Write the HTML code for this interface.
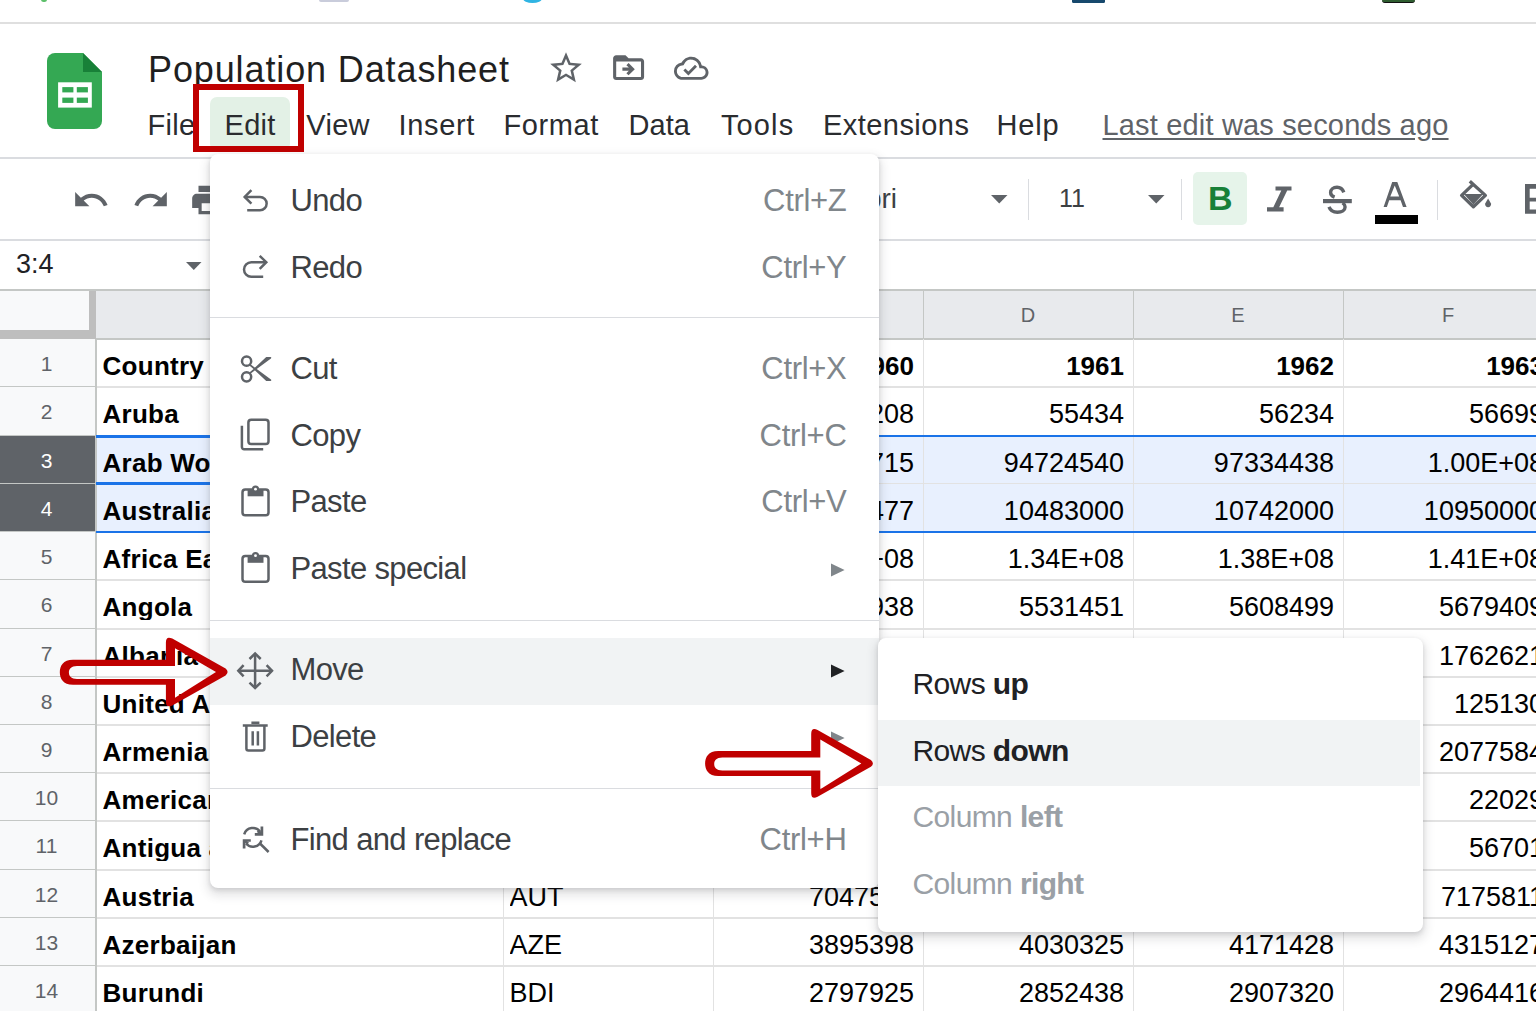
<!DOCTYPE html><html><head><meta charset="utf-8"><style>
*{box-sizing:border-box;margin:0;padding:0}
html,body{width:1536px;height:1011px;overflow:hidden;background:#fff;font-family:"Liberation Sans",sans-serif}
.a{position:absolute}
.t{position:absolute;white-space:pre;line-height:1}
.menu{position:absolute;background:#fff;border-radius:8px;box-shadow:0 5px 10px 3px rgba(60,64,67,.13),0 2px 4px rgba(60,64,67,.16)}
</style></head><body><div class="a" style="left:0;top:22.2px;width:1536px;height:1.8px;background:#dfdfdf"></div>
<div class="a" style="left:41px;top:-3px;width:6px;height:5px;border-radius:3px;background:#5cbf6a"></div>
<div class="a" style="left:319px;top:-2px;width:30px;height:4px;border-radius:2px;background:#c9ccdb"></div>
<div class="a" style="left:523px;top:-6px;width:19px;height:9px;border-radius:50%;background:#2fb4e3"></div>
<div class="a" style="left:1072px;top:-3px;width:33px;height:5.5px;border-radius:1.5px;background:#17496d"></div>
<div class="a" style="left:1382px;top:-4px;width:33px;height:6.5px;border-radius:3px;background:#2f5d30;border-bottom:1.5px solid #111"></div>
<svg class="a" style="left:47px;top:53px" width="56" height="76" viewBox="0 0 56 76">
<path d="M8 0 H36 L55 19 V68 a8 8 0 0 1 -8 8 H8 a8 8 0 0 1 -8 -8 V8 a8 8 0 0 1 8 -8Z" fill="#34a853"/>
<path d="M36 0 L55 19 H36Z" fill="#188038"/>
<rect x="11.1" y="29.3" width="33.7" height="25.3" fill="#fff"/>
<rect x="15.3" y="34.1" width="11.1" height="5.3" fill="#34a853"/>
<rect x="29.8" y="34.1" width="11.1" height="5.3" fill="#34a853"/>
<rect x="15.3" y="44.6" width="11.1" height="5.3" fill="#34a853"/>
<rect x="29.8" y="44.6" width="11.1" height="5.3" fill="#34a853"/>
</svg>
<div class="t" style="left:148px;top:52px;font-size:36px;color:#1f1f1f;letter-spacing:0.88px">Population Datasheet</div>
<svg class="a" style="left:547.3px;top:49.4px" width="38" height="38" viewBox="0 0 24 24"><path fill="#5f6368" d="M22 9.24l-7.19-.62L12 2 9.19 8.63 2 9.24l5.46 4.73L5.82 21 12 17.27 18.18 21l-1.63-7.03L22 9.24zM12 15.4l-3.76 2.27 1-4.28-3.32-2.88 4.38-.38L12 6.1l1.71 4.04 4.38.38-3.32 2.88 1 4.28L12 15.4z"/></svg>
<svg class="a" style="left:609.6px;top:49.3px" width="37.2" height="37.2" viewBox="0 0 24 24"><path fill="#5f6368" d="M20 6h-8l-2-2H4c-1.1 0-2 .9-2 2v12c0 1.1.9 2 2 2h16c1.1 0 2-.9 2-2V8c0-1.1-.9-2-2-2zm0 12H4V8h16v10zm-8.01-9l-1.41 1.41L12.16 12H8v2h4.16l-1.59 1.59L11.99 17 16 13.01 11.99 9z"/></svg>
<svg class="a" style="left:674.2px;top:51px" width="34.5" height="34.5" viewBox="0 0 24 24"><path fill="#5f6368" d="M19.35 10.04A7.49 7.49 0 0 0 12 4C9.11 4 6.6 5.64 5.35 8.04A5.994 5.994 0 0 0 0 14c0 3.31 2.69 6 6 6h13c2.76 0 5-2.24 5-5 0-2.64-2.05-4.78-4.65-4.96zM19 18H6c-2.21 0-4-1.79-4-4 0-2.05 1.53-3.76 3.56-3.97l1.07-.11.5-.95A5.469 5.469 0 0 1 12 6c2.62 0 4.88 1.86 5.39 4.43l.3 1.5 1.53.11A2.98 2.98 0 0 1 22 15c0 1.65-1.35 3-3 3zm-9-3.82l-2.09-2.09L6.5 13.5 10 17l6.01-6.01-1.41-1.41z"/></svg>
<div class="a" style="left:209.5px;top:97px;width:80px;height:54px;border-radius:7px;background:#e3f1e6"></div>
<div class="t" style="left:147.5px;top:111px;font-size:29px;color:#2a2c2f;letter-spacing:0.3px">File</div>
<div class="t" style="left:224.5px;top:111px;font-size:29px;color:#2a2c2f;letter-spacing:0.3px">Edit</div>
<div class="t" style="left:306.3px;top:111px;font-size:29px;color:#2a2c2f;letter-spacing:0.3px">View</div>
<div class="t" style="left:398.5px;top:111px;font-size:29px;color:#2a2c2f;letter-spacing:0.65px">Insert</div>
<div class="t" style="left:503.5px;top:111px;font-size:29px;color:#2a2c2f;letter-spacing:0.6px">Format</div>
<div class="t" style="left:628.5px;top:111px;font-size:29px;color:#2a2c2f;letter-spacing:0.05px">Data</div>
<div class="t" style="left:720.9px;top:111px;font-size:29px;color:#2a2c2f;letter-spacing:1.15px">Tools</div>
<div class="t" style="left:823px;top:111px;font-size:29px;color:#2a2c2f;letter-spacing:0.45px">Extensions</div>
<div class="t" style="left:996.5px;top:111px;font-size:29px;color:#2a2c2f;letter-spacing:0.8px">Help</div>
<div class="t" style="left:1102.5px;top:111px;font-size:29px;color:#5f6368;letter-spacing:0.17px;text-decoration:underline;text-underline-offset:3px">Last edit was seconds ago</div>
<div class="a" style="left:192.5px;top:84px;width:111px;height:67.5px;border:6.5px solid #c00000"></div>
<div class="a" style="left:0;top:157px;width:1536px;height:1.5px;background:#dadce0"></div>
<svg class="a" style="left:71.8px;top:181px" width="38" height="38" viewBox="0 0 24 24"><path fill="#5f6368" d="M12.5 8c-2.65 0-5.05.99-6.9 2.6L2 7v9h9l-3.62-3.62c1.39-1.16 3.16-1.88 5.12-1.88 3.54 0 6.55 2.31 7.6 5.5l2.37-.78C21.08 11.03 17.15 8 12.5 8z"/></svg>
<svg class="a" style="left:132.1px;top:181px" width="38" height="38" viewBox="0 0 24 24"><path fill="#5f6368" d="M18.4 10.6C16.55 8.99 14.15 8 11.5 8c-4.65 0-8.58 3.03-9.96 7.22L3.9 16c1.05-3.19 4.05-5.5 7.6-5.5 1.95 0 3.73.72 5.12 1.88L13 16h9V7l-3.6 3.6z"/></svg>
<svg class="a" style="left:188.6px;top:180.5px" width="38" height="38" viewBox="0 0 24 24"><path fill="#5f6368" d="M19 8H5c-1.66 0-3 1.34-3 3v6h4v4h12v-4h4v-6c0-1.66-1.34-3-3-3zm-3 11H8v-5h8v5zm3-7c-.55 0-1-.45-1-1s.45-1 1-1 1 .45 1 1-.45 1-1 1zm-1-9H6v4h12V3z"/></svg>
<div class="t" style="left:697px;width:200px;text-align:right;top:185px;font-size:28px;color:#3c4043">Calibri</div>
<svg class="a" style="left:991px;top:195px" width="17" height="9"><path d="M0 0H16.5L8.25 8.5Z" fill="#5f6368"/></svg>
<div class="a" style="left:1027.5px;top:179px;width:1.5px;height:41px;background:#dadce0"></div>
<div class="t" style="left:1059px;top:186px;font-size:25px;color:#3c4043">11</div>
<svg class="a" style="left:1148px;top:195px" width="17" height="9"><path d="M0 0H16.5L8.25 8.5Z" fill="#5f6368"/></svg>
<div class="a" style="left:1180.5px;top:179px;width:1.5px;height:41px;background:#dadce0"></div>
<div class="a" style="left:1193px;top:172px;width:54px;height:53px;border-radius:5px;background:#e6f4ea"></div>
<div class="t" style="left:1208px;top:181px;font-size:34px;font-weight:700;color:#188038">B</div>
<svg class="a" style="left:0;top:0" width="1536" height="1011" fill="#5f6368">
<path d="M1275.5 186.6 H1291.5 V190.6 H1275.5Z M1267 207.3 H1283.6 V211.5 H1267Z M1281.3 190.4 H1287.2 L1279 207.4 H1273.2Z"/>
<rect x="1323" y="199" width="28.8" height="4.2"/>
<path d="M1343.8 192.4 C1342.6 189 1340 187.3 1337 187.3 C1333.2 187.3 1330.6 189.6 1330.6 192.4 C1330.6 194.6 1332 196.2 1334.6 197.2" fill="none" stroke="#5f6368" stroke-width="3.4"/>
<path d="M1342.6 202.8 C1344.3 204 1345.1 205.3 1345.1 207 C1345.1 210.2 1341.8 212.2 1337.4 212.2 C1333.4 212.2 1330.3 210.4 1329 206.8" fill="none" stroke="#5f6368" stroke-width="3.4"/>
<path fill-rule="evenodd" d="M1392.2 181.9 H1397.3 L1406.6 207.1 H1403 L1400.6 200.2 H1389.2 L1386.9 207.1 H1383.6Z M1394.75 185.6 L1399.2 196.4 H1390.3Z"/>
<path d="M1469.8 181.2 L1485.4 195.4 L1473.4 206.8 L1461.6 195.4 L1472.8 184.6" fill="none" stroke="#5f6368" stroke-width="3.3" stroke-linejoin="round"/>
<path d="M1463.8 194 H1483.2 L1473.4 204.6Z"/>
<path d="M1488.1 198.6 L1491 203.4 A3 3 0 1 1 1485.2 203.4 Z"/>
<path d="M1525 184 H1536 V188.7 H1529.7 V197.8 H1536 V201.6 H1529.7 V209.4 H1536 V213.8 H1525Z"/>
</svg>
<div class="a" style="left:1375px;top:215.4px;width:43.3px;height:8.3px;background:#000"></div>
<div class="a" style="left:1436.5px;top:180px;width:1.5px;height:40px;background:#dadce0"></div>
<div class="a" style="left:0;top:239px;width:1536px;height:1.5px;background:#dadce0"></div>
<div class="t" style="left:16px;top:251px;font-size:27px;color:#202124">3:4</div>
<svg class="a" style="left:186px;top:262px" width="16" height="9"><path d="M0 0H15.5L7.75 8Z" fill="#5f6368"/></svg>
<div class="a" style="left:0;top:289px;width:1536px;height:50px;background:#e8eaed"></div>
<div class="a" style="left:0;top:289px;width:1536px;height:1.8px;background:#c4c7c5"></div>
<div class="a" style="left:0;top:290.8px;width:88.5px;height:39px;background:#f8f9fa"></div>
<div class="a" style="left:88.5px;top:290.8px;width:7.7px;height:48.5px;background:#bebebe"></div>
<div class="a" style="left:0;top:329.8px;width:96.2px;height:9.5px;background:#bebebe"></div>
<div class="a" style="left:96px;top:338px;width:1440px;height:2px;background:#c4c7c5"></div>
<div class="t" style="left:96px;width:407px;text-align:center;top:305px;font-size:20px;color:#5f6368">A</div>
<div class="a" style="left:502.5px;top:290px;width:1.5px;height:49px;background:#c4c7c5"></div>
<div class="t" style="left:503px;width:210px;text-align:center;top:305px;font-size:20px;color:#5f6368">B</div>
<div class="a" style="left:712.5px;top:290px;width:1.5px;height:49px;background:#c4c7c5"></div>
<div class="t" style="left:713px;width:210px;text-align:center;top:305px;font-size:20px;color:#5f6368">C</div>
<div class="a" style="left:922.5px;top:290px;width:1.5px;height:49px;background:#c4c7c5"></div>
<div class="t" style="left:923px;width:210px;text-align:center;top:305px;font-size:20px;color:#5f6368">D</div>
<div class="a" style="left:1132.5px;top:290px;width:1.5px;height:49px;background:#c4c7c5"></div>
<div class="t" style="left:1133px;width:210px;text-align:center;top:305px;font-size:20px;color:#5f6368">E</div>
<div class="a" style="left:1342.5px;top:290px;width:1.5px;height:49px;background:#c4c7c5"></div>
<div class="t" style="left:1343px;width:210px;text-align:center;top:305px;font-size:20px;color:#5f6368">F</div>
<div class="a" style="left:0;top:339px;width:95px;height:48px;background:#f8f9fa"></div>
<div class="t" style="left:-1px;width:95px;text-align:center;top:353px;font-size:21px;color:#5f6368">1</div>
<div class="a" style="left:0;top:386px;width:95px;height:1.5px;background:#c4c7c5"></div>
<div class="a" style="left:96px;top:386px;width:1440px;height:1.5px;background:#e2e2e2"></div>
<div class="a" style="left:102.6px;width:399px;overflow:hidden;white-space:pre;line-height:1;letter-spacing:0.25px;top:353px;font-size:26px;font-weight:700;color:#000">Country</div>
<div class="t" style="left:713px;width:201px;text-align:right;overflow:hidden;top:353px;font-size:26px;font-weight:700;color:#000">1960</div>
<div class="t" style="left:923px;width:201px;text-align:right;overflow:hidden;top:353px;font-size:26px;font-weight:700;color:#000">1961</div>
<div class="t" style="left:1133px;width:201px;text-align:right;overflow:hidden;top:353px;font-size:26px;font-weight:700;color:#000">1962</div>
<div class="t" style="left:1343px;width:201px;text-align:right;overflow:hidden;top:353px;font-size:26px;font-weight:700;color:#000">1963</div>
<div class="a" style="left:0;top:387px;width:95px;height:49px;background:#f8f9fa"></div>
<div class="t" style="left:-1px;width:95px;text-align:center;top:401px;font-size:21px;color:#5f6368">2</div>
<div class="a" style="left:0;top:435px;width:95px;height:1.5px;background:#c4c7c5"></div>
<div class="a" style="left:96px;top:435px;width:1440px;height:1.5px;background:#e2e2e2"></div>
<div class="a" style="left:102.6px;width:399px;overflow:hidden;white-space:pre;line-height:1;letter-spacing:0.25px;top:401px;font-size:26px;font-weight:700;color:#000">Aruba</div>
<div class="a" style="left:509.6px;width:202px;overflow:hidden;white-space:pre;line-height:1;letter-spacing:0px;top:401px;font-size:27px;font-weight:400;color:#000">ABW</div>
<div class="t" style="left:713px;width:201px;text-align:right;overflow:hidden;top:401px;font-size:27px;font-weight:400;color:#000">54208</div>
<div class="t" style="left:923px;width:201px;text-align:right;overflow:hidden;top:401px;font-size:27px;font-weight:400;color:#000">55434</div>
<div class="t" style="left:1133px;width:201px;text-align:right;overflow:hidden;top:401px;font-size:27px;font-weight:400;color:#000">56234</div>
<div class="t" style="left:1343px;width:201px;text-align:right;overflow:hidden;top:401px;font-size:27px;font-weight:400;color:#000">56699</div>
<div class="a" style="left:0;top:436px;width:95px;height:48px;background:#5f6368"></div>
<div class="t" style="left:-1px;width:95px;text-align:center;top:450px;font-size:21px;color:#fff">3</div>
<div class="a" style="left:96px;top:436px;width:1440px;height:48px;background:#e8f0fe"></div>
<div class="a" style="left:0;top:483px;width:95px;height:1.5px;background:#c4c7c5"></div>
<div class="a" style="left:96px;top:483px;width:1440px;height:1.5px;background:#e2e2e2"></div>
<div class="a" style="left:102.6px;width:399px;overflow:hidden;white-space:pre;line-height:1;letter-spacing:0.25px;top:450px;font-size:26px;font-weight:700;color:#000">Arab World</div>
<div class="a" style="left:509.6px;width:202px;overflow:hidden;white-space:pre;line-height:1;letter-spacing:0px;top:450px;font-size:27px;font-weight:400;color:#000">ARB</div>
<div class="t" style="left:713px;width:201px;text-align:right;overflow:hidden;top:450px;font-size:27px;font-weight:400;color:#000">92197715</div>
<div class="t" style="left:923px;width:201px;text-align:right;overflow:hidden;top:450px;font-size:27px;font-weight:400;color:#000">94724540</div>
<div class="t" style="left:1133px;width:201px;text-align:right;overflow:hidden;top:450px;font-size:27px;font-weight:400;color:#000">97334438</div>
<div class="t" style="left:1343px;width:201px;text-align:right;overflow:hidden;top:450px;font-size:27px;font-weight:400;color:#000">1.00E+08</div>
<div class="a" style="left:0;top:484px;width:95px;height:48px;background:#5f6368"></div>
<div class="t" style="left:-1px;width:95px;text-align:center;top:498px;font-size:21px;color:#fff">4</div>
<div class="a" style="left:96px;top:484px;width:1440px;height:48px;background:#e8f0fe"></div>
<div class="a" style="left:0;top:531px;width:95px;height:1.5px;background:#c4c7c5"></div>
<div class="a" style="left:96px;top:531px;width:1440px;height:1.5px;background:#e2e2e2"></div>
<div class="a" style="left:102.6px;width:399px;overflow:hidden;white-space:pre;line-height:1;letter-spacing:0.25px;top:498px;font-size:26px;font-weight:700;color:#000">Australia</div>
<div class="a" style="left:509.6px;width:202px;overflow:hidden;white-space:pre;line-height:1;letter-spacing:0px;top:498px;font-size:27px;font-weight:400;color:#000">AUS</div>
<div class="t" style="left:713px;width:201px;text-align:right;overflow:hidden;top:498px;font-size:27px;font-weight:400;color:#000">10276477</div>
<div class="t" style="left:923px;width:201px;text-align:right;overflow:hidden;top:498px;font-size:27px;font-weight:400;color:#000">10483000</div>
<div class="t" style="left:1133px;width:201px;text-align:right;overflow:hidden;top:498px;font-size:27px;font-weight:400;color:#000">10742000</div>
<div class="t" style="left:1343px;width:201px;text-align:right;overflow:hidden;top:498px;font-size:27px;font-weight:400;color:#000">10950000</div>
<div class="a" style="left:0;top:532px;width:95px;height:48px;background:#f8f9fa"></div>
<div class="t" style="left:-1px;width:95px;text-align:center;top:546px;font-size:21px;color:#5f6368">5</div>
<div class="a" style="left:0;top:579px;width:95px;height:1.5px;background:#c4c7c5"></div>
<div class="a" style="left:96px;top:579px;width:1440px;height:1.5px;background:#e2e2e2"></div>
<div class="a" style="left:102.6px;width:399px;overflow:hidden;white-space:pre;line-height:1;letter-spacing:0.25px;top:546px;font-size:26px;font-weight:700;color:#000">Africa Eastern and Southern</div>
<div class="a" style="left:509.6px;width:202px;overflow:hidden;white-space:pre;line-height:1;letter-spacing:0px;top:546px;font-size:27px;font-weight:400;color:#000">AFE</div>
<div class="t" style="left:713px;width:201px;text-align:right;overflow:hidden;top:546px;font-size:27px;font-weight:400;color:#000">1.31E+08</div>
<div class="t" style="left:923px;width:201px;text-align:right;overflow:hidden;top:546px;font-size:27px;font-weight:400;color:#000">1.34E+08</div>
<div class="t" style="left:1133px;width:201px;text-align:right;overflow:hidden;top:546px;font-size:27px;font-weight:400;color:#000">1.38E+08</div>
<div class="t" style="left:1343px;width:201px;text-align:right;overflow:hidden;top:546px;font-size:27px;font-weight:400;color:#000">1.41E+08</div>
<div class="a" style="left:0;top:580px;width:95px;height:49px;background:#f8f9fa"></div>
<div class="t" style="left:-1px;width:95px;text-align:center;top:594px;font-size:21px;color:#5f6368">6</div>
<div class="a" style="left:0;top:628px;width:95px;height:1.5px;background:#c4c7c5"></div>
<div class="a" style="left:96px;top:628px;width:1440px;height:1.5px;background:#e2e2e2"></div>
<div class="a" style="left:102.6px;width:399px;overflow:hidden;white-space:pre;line-height:1;letter-spacing:0.25px;top:594px;font-size:26px;font-weight:700;color:#000">Angola</div>
<div class="a" style="left:509.6px;width:202px;overflow:hidden;white-space:pre;line-height:1;letter-spacing:0px;top:594px;font-size:27px;font-weight:400;color:#000">AGO</div>
<div class="t" style="left:713px;width:201px;text-align:right;overflow:hidden;top:594px;font-size:27px;font-weight:400;color:#000">5454938</div>
<div class="t" style="left:923px;width:201px;text-align:right;overflow:hidden;top:594px;font-size:27px;font-weight:400;color:#000">5531451</div>
<div class="t" style="left:1133px;width:201px;text-align:right;overflow:hidden;top:594px;font-size:27px;font-weight:400;color:#000">5608499</div>
<div class="t" style="left:1343px;width:201px;text-align:right;overflow:hidden;top:594px;font-size:27px;font-weight:400;color:#000">5679409</div>
<div class="a" style="left:0;top:629px;width:95px;height:48px;background:#f8f9fa"></div>
<div class="t" style="left:-1px;width:95px;text-align:center;top:643px;font-size:21px;color:#5f6368">7</div>
<div class="a" style="left:0;top:676px;width:95px;height:1.5px;background:#c4c7c5"></div>
<div class="a" style="left:96px;top:676px;width:1440px;height:1.5px;background:#e2e2e2"></div>
<div class="a" style="left:102.6px;width:399px;overflow:hidden;white-space:pre;line-height:1;letter-spacing:0.25px;top:643px;font-size:26px;font-weight:700;color:#000">Albania</div>
<div class="a" style="left:509.6px;width:202px;overflow:hidden;white-space:pre;line-height:1;letter-spacing:0px;top:643px;font-size:27px;font-weight:400;color:#000">ALB</div>
<div class="t" style="left:713px;width:201px;text-align:right;overflow:hidden;top:643px;font-size:27px;font-weight:400;color:#000">1608800</div>
<div class="t" style="left:923px;width:201px;text-align:right;overflow:hidden;top:643px;font-size:27px;font-weight:400;color:#000">1659800</div>
<div class="t" style="left:1133px;width:201px;text-align:right;overflow:hidden;top:643px;font-size:27px;font-weight:400;color:#000">1711319</div>
<div class="t" style="left:1343px;width:201px;text-align:right;overflow:hidden;top:643px;font-size:27px;font-weight:400;color:#000">1762621</div>
<div class="a" style="left:0;top:677px;width:95px;height:48px;background:#f8f9fa"></div>
<div class="t" style="left:-1px;width:95px;text-align:center;top:691px;font-size:21px;color:#5f6368">8</div>
<div class="a" style="left:0;top:724px;width:95px;height:1.5px;background:#c4c7c5"></div>
<div class="a" style="left:96px;top:724px;width:1440px;height:1.5px;background:#e2e2e2"></div>
<div class="a" style="left:102.6px;width:399px;overflow:hidden;white-space:pre;line-height:1;letter-spacing:0.25px;top:691px;font-size:26px;font-weight:700;color:#000">United Arab Emirates</div>
<div class="a" style="left:509.6px;width:202px;overflow:hidden;white-space:pre;line-height:1;letter-spacing:0px;top:691px;font-size:27px;font-weight:400;color:#000">ARE</div>
<div class="t" style="left:713px;width:201px;text-align:right;overflow:hidden;top:691px;font-size:27px;font-weight:400;color:#000">92417</div>
<div class="t" style="left:923px;width:201px;text-align:right;overflow:hidden;top:691px;font-size:27px;font-weight:400;color:#000">100801</div>
<div class="t" style="left:1133px;width:201px;text-align:right;overflow:hidden;top:691px;font-size:27px;font-weight:400;color:#000">112112</div>
<div class="t" style="left:1343px;width:201px;text-align:right;overflow:hidden;top:691px;font-size:27px;font-weight:400;color:#000">125130</div>
<div class="a" style="left:0;top:725px;width:95px;height:48px;background:#f8f9fa"></div>
<div class="t" style="left:-1px;width:95px;text-align:center;top:739px;font-size:21px;color:#5f6368">9</div>
<div class="a" style="left:0;top:772px;width:95px;height:1.5px;background:#c4c7c5"></div>
<div class="a" style="left:96px;top:772px;width:1440px;height:1.5px;background:#e2e2e2"></div>
<div class="a" style="left:102.6px;width:399px;overflow:hidden;white-space:pre;line-height:1;letter-spacing:0.25px;top:739px;font-size:26px;font-weight:700;color:#000">Armenia</div>
<div class="a" style="left:509.6px;width:202px;overflow:hidden;white-space:pre;line-height:1;letter-spacing:0px;top:739px;font-size:27px;font-weight:400;color:#000">ARM</div>
<div class="t" style="left:713px;width:201px;text-align:right;overflow:hidden;top:739px;font-size:27px;font-weight:400;color:#000">1874119</div>
<div class="t" style="left:923px;width:201px;text-align:right;overflow:hidden;top:739px;font-size:27px;font-weight:400;color:#000">1941498</div>
<div class="t" style="left:1133px;width:201px;text-align:right;overflow:hidden;top:739px;font-size:27px;font-weight:400;color:#000">2009524</div>
<div class="t" style="left:1343px;width:201px;text-align:right;overflow:hidden;top:739px;font-size:27px;font-weight:400;color:#000">2077584</div>
<div class="a" style="left:0;top:773px;width:95px;height:48px;background:#f8f9fa"></div>
<div class="t" style="left:-1px;width:95px;text-align:center;top:787px;font-size:21px;color:#5f6368">10</div>
<div class="a" style="left:0;top:820px;width:95px;height:1.5px;background:#c4c7c5"></div>
<div class="a" style="left:96px;top:820px;width:1440px;height:1.5px;background:#e2e2e2"></div>
<div class="a" style="left:102.6px;width:399px;overflow:hidden;white-space:pre;line-height:1;letter-spacing:0.25px;top:787px;font-size:26px;font-weight:700;color:#000">American Samoa</div>
<div class="a" style="left:509.6px;width:202px;overflow:hidden;white-space:pre;line-height:1;letter-spacing:0px;top:787px;font-size:27px;font-weight:400;color:#000">ASM</div>
<div class="t" style="left:713px;width:201px;text-align:right;overflow:hidden;top:787px;font-size:27px;font-weight:400;color:#000">20127</div>
<div class="t" style="left:923px;width:201px;text-align:right;overflow:hidden;top:787px;font-size:27px;font-weight:400;color:#000">20605</div>
<div class="t" style="left:1133px;width:201px;text-align:right;overflow:hidden;top:787px;font-size:27px;font-weight:400;color:#000">21246</div>
<div class="t" style="left:1343px;width:201px;text-align:right;overflow:hidden;top:787px;font-size:27px;font-weight:400;color:#000">22029</div>
<div class="a" style="left:0;top:821px;width:95px;height:49px;background:#f8f9fa"></div>
<div class="t" style="left:-1px;width:95px;text-align:center;top:835px;font-size:21px;color:#5f6368">11</div>
<div class="a" style="left:0;top:869px;width:95px;height:1.5px;background:#c4c7c5"></div>
<div class="a" style="left:96px;top:869px;width:1440px;height:1.5px;background:#e2e2e2"></div>
<div class="a" style="left:102.6px;width:399px;overflow:hidden;white-space:pre;line-height:1;letter-spacing:0.25px;top:835px;font-size:26px;font-weight:700;color:#000">Antigua and Barbuda</div>
<div class="a" style="left:509.6px;width:202px;overflow:hidden;white-space:pre;line-height:1;letter-spacing:0px;top:835px;font-size:27px;font-weight:400;color:#000">ATG</div>
<div class="t" style="left:713px;width:201px;text-align:right;overflow:hidden;top:835px;font-size:27px;font-weight:400;color:#000">54132</div>
<div class="t" style="left:923px;width:201px;text-align:right;overflow:hidden;top:835px;font-size:27px;font-weight:400;color:#000">55005</div>
<div class="t" style="left:1133px;width:201px;text-align:right;overflow:hidden;top:835px;font-size:27px;font-weight:400;color:#000">55849</div>
<div class="t" style="left:1343px;width:201px;text-align:right;overflow:hidden;top:835px;font-size:27px;font-weight:400;color:#000">56701</div>
<div class="a" style="left:0;top:870px;width:95px;height:48px;background:#f8f9fa"></div>
<div class="t" style="left:-1px;width:95px;text-align:center;top:884px;font-size:21px;color:#5f6368">12</div>
<div class="a" style="left:0;top:917px;width:95px;height:1.5px;background:#c4c7c5"></div>
<div class="a" style="left:96px;top:917px;width:1440px;height:1.5px;background:#e2e2e2"></div>
<div class="a" style="left:102.6px;width:399px;overflow:hidden;white-space:pre;line-height:1;letter-spacing:0.25px;top:884px;font-size:26px;font-weight:700;color:#000">Austria</div>
<div class="a" style="left:509.6px;width:202px;overflow:hidden;white-space:pre;line-height:1;letter-spacing:0px;top:884px;font-size:27px;font-weight:400;color:#000">AUT</div>
<div class="t" style="left:713px;width:201px;text-align:right;overflow:hidden;top:884px;font-size:27px;font-weight:400;color:#000">7047539</div>
<div class="t" style="left:923px;width:201px;text-align:right;overflow:hidden;top:884px;font-size:27px;font-weight:400;color:#000">7086299</div>
<div class="t" style="left:1133px;width:201px;text-align:right;overflow:hidden;top:884px;font-size:27px;font-weight:400;color:#000">7129864</div>
<div class="t" style="left:1343px;width:201px;text-align:right;overflow:hidden;top:884px;font-size:27px;font-weight:400;color:#000">7175811</div>
<div class="a" style="left:0;top:918px;width:95px;height:48px;background:#f8f9fa"></div>
<div class="t" style="left:-1px;width:95px;text-align:center;top:932px;font-size:21px;color:#5f6368">13</div>
<div class="a" style="left:0;top:965px;width:95px;height:1.5px;background:#c4c7c5"></div>
<div class="a" style="left:96px;top:965px;width:1440px;height:1.5px;background:#e2e2e2"></div>
<div class="a" style="left:102.6px;width:399px;overflow:hidden;white-space:pre;line-height:1;letter-spacing:0.25px;top:932px;font-size:26px;font-weight:700;color:#000">Azerbaijan</div>
<div class="a" style="left:509.6px;width:202px;overflow:hidden;white-space:pre;line-height:1;letter-spacing:0px;top:932px;font-size:27px;font-weight:400;color:#000">AZE</div>
<div class="t" style="left:713px;width:201px;text-align:right;overflow:hidden;top:932px;font-size:27px;font-weight:400;color:#000">3895398</div>
<div class="t" style="left:923px;width:201px;text-align:right;overflow:hidden;top:932px;font-size:27px;font-weight:400;color:#000">4030325</div>
<div class="t" style="left:1133px;width:201px;text-align:right;overflow:hidden;top:932px;font-size:27px;font-weight:400;color:#000">4171428</div>
<div class="t" style="left:1343px;width:201px;text-align:right;overflow:hidden;top:932px;font-size:27px;font-weight:400;color:#000">4315127</div>
<div class="a" style="left:0;top:966px;width:95px;height:49px;background:#f8f9fa"></div>
<div class="t" style="left:-1px;width:95px;text-align:center;top:980px;font-size:21px;color:#5f6368">14</div>
<div class="a" style="left:0;top:1014px;width:95px;height:1.5px;background:#c4c7c5"></div>
<div class="a" style="left:96px;top:1014px;width:1440px;height:1.5px;background:#e2e2e2"></div>
<div class="a" style="left:102.6px;width:399px;overflow:hidden;white-space:pre;line-height:1;letter-spacing:0.25px;top:980px;font-size:26px;font-weight:700;color:#000">Burundi</div>
<div class="a" style="left:509.6px;width:202px;overflow:hidden;white-space:pre;line-height:1;letter-spacing:0px;top:980px;font-size:27px;font-weight:400;color:#000">BDI</div>
<div class="t" style="left:713px;width:201px;text-align:right;overflow:hidden;top:980px;font-size:27px;font-weight:400;color:#000">2797925</div>
<div class="t" style="left:923px;width:201px;text-align:right;overflow:hidden;top:980px;font-size:27px;font-weight:400;color:#000">2852438</div>
<div class="t" style="left:1133px;width:201px;text-align:right;overflow:hidden;top:980px;font-size:27px;font-weight:400;color:#000">2907320</div>
<div class="t" style="left:1343px;width:201px;text-align:right;overflow:hidden;top:980px;font-size:27px;font-weight:400;color:#000">2964416</div>
<div class="a" style="left:95px;top:339px;width:1.5px;height:672px;background:#c4c7c5"></div>
<div class="a" style="left:502.5px;top:339px;width:1.2px;height:672px;background:#e2e2e2"></div>
<div class="a" style="left:712.5px;top:339px;width:1.2px;height:672px;background:#e2e2e2"></div>
<div class="a" style="left:922.5px;top:339px;width:1.2px;height:672px;background:#e2e2e2"></div>
<div class="a" style="left:1132.5px;top:339px;width:1.2px;height:672px;background:#e2e2e2"></div>
<div class="a" style="left:1342.5px;top:339px;width:1.2px;height:672px;background:#e2e2e2"></div>
<div class="a" style="left:96px;top:434.5px;width:1440px;height:2px;background:#1a73e8"></div>
<div class="a" style="left:96px;top:434.6px;width:407px;height:3.2px;background:#1a73e8"></div>
<div class="a" style="left:96px;top:481.7px;width:407px;height:3.2px;background:#1a73e8"></div>
<div class="a" style="left:96px;top:530.5px;width:1440px;height:2px;background:#1a73e8"></div>
<div class="menu" style="left:209.5px;top:153.5px;width:669.5px;height:734px"></div>
<div class="a" style="left:210px;top:637.5px;width:669px;height:67px;background:#f1f3f4"></div>
<div class="a" style="left:210px;top:316.5px;width:669px;height:1.5px;background:#dadce0"></div>
<div class="a" style="left:210px;top:619.5px;width:669px;height:1.5px;background:#dadce0"></div>
<div class="a" style="left:210px;top:787.5px;width:669px;height:1.5px;background:#dadce0"></div>
<div class="t" style="left:290.5px;top:185.3px;font-size:31px;letter-spacing:-0.65px;color:#3c4043">Undo</div>
<div class="t" style="left:680px;width:166.5px;text-align:right;top:185.3px;font-size:31px;letter-spacing:-0.3px;color:#80868b">Ctrl+Z</div>
<div class="t" style="left:290.5px;top:251.8px;font-size:31px;letter-spacing:-0.65px;color:#3c4043">Redo</div>
<div class="t" style="left:680px;width:166.5px;text-align:right;top:251.8px;font-size:31px;letter-spacing:-0.3px;color:#80868b">Ctrl+Y</div>
<div class="t" style="left:290.5px;top:353.3px;font-size:31px;letter-spacing:-0.65px;color:#3c4043">Cut</div>
<div class="t" style="left:680px;width:166.5px;text-align:right;top:353.3px;font-size:31px;letter-spacing:-0.3px;color:#80868b">Ctrl+X</div>
<div class="t" style="left:290.5px;top:419.8px;font-size:31px;letter-spacing:-0.65px;color:#3c4043">Copy</div>
<div class="t" style="left:680px;width:166.5px;text-align:right;top:419.8px;font-size:31px;letter-spacing:-0.3px;color:#80868b">Ctrl+C</div>
<div class="t" style="left:290.5px;top:486.3px;font-size:31px;letter-spacing:-0.65px;color:#3c4043">Paste</div>
<div class="t" style="left:680px;width:166.5px;text-align:right;top:486.3px;font-size:31px;letter-spacing:-0.3px;color:#80868b">Ctrl+V</div>
<div class="t" style="left:290.5px;top:553.3px;font-size:31px;letter-spacing:-0.65px;color:#3c4043">Paste special</div>
<svg class="a" style="left:829.5px;top:562.5px" width="16" height="15"><path d="M1 0.6 L14.6 7.1 L1 13.5Z" fill="#80868b"/></svg>
<div class="t" style="left:290.5px;top:654.3px;font-size:31px;letter-spacing:-0.65px;color:#3c4043">Move</div>
<svg class="a" style="left:829.5px;top:663.5px" width="16" height="15"><path d="M1 0.6 L14.6 7.1 L1 13.5Z" fill="#202124"/></svg>
<div class="t" style="left:290.5px;top:721.3px;font-size:31px;letter-spacing:-0.65px;color:#3c4043">Delete</div>
<svg class="a" style="left:829.5px;top:730.5px" width="16" height="15"><path d="M1 0.6 L14.6 7.1 L1 13.5Z" fill="#80868b"/></svg>
<div class="t" style="left:290.5px;top:823.8px;font-size:31px;letter-spacing:-0.65px;color:#3c4043">Find and replace</div>
<div class="t" style="left:680px;width:166.5px;text-align:right;top:823.8px;font-size:31px;letter-spacing:-0.3px;color:#80868b">Ctrl+H</div>
<svg class="a" style="left:0;top:0" width="1536" height="1011" fill="none" stroke="#5f6368" stroke-width="2.5">
<path d="M247.2 210.2 H260 A6.65 6.65 0 0 0 260 196.9 H244.5"/><path d="M251.4 190.2 L244.7 196.9 L251.4 203.6"/>
<path d="M263.2 276.8 H251.3 A7.3 7.3 0 0 1 251.3 262.2 H265.5"/><path d="M259.7 255.8 L266.3 262.2 L259.7 268.8"/>
<circle cx="246.6" cy="361.2" r="4.6"/><circle cx="246.6" cy="376.8" r="4.6"/>
<path d="M250 373 L254 369.5 L266.5 357.8 H270.5 Z M250 365 L254 368.5 L266.5 380.2 H270.5 Z" fill="#5f6368" stroke-width="1.6" stroke-linejoin="round"/>
<rect x="248.4" y="419.7" width="20.1" height="24.3" rx="2.8"/>
<path d="M241.9 425.7 V447 a2.2 2.2 0 0 0 2.2 2.2 H263.2"/>
<rect x="242.5" y="489.5" width="26" height="25.8" rx="2.8"/>
<rect x="242.5" y="556" width="26" height="25.8" rx="2.8"/>
<path d="M255.1 654 V687.4 M238.6 670.8 H272.1"/>
<path d="M249.5 659 L255.1 653.6 L260.7 659 M249.5 682.6 L255.1 688 L260.7 682.6 M243.6 665.2 L238.3 670.8 L243.6 676.4 M266.6 665.2 L272 670.8 L266.6 676.4"/>
<path d="M242.8 725.6 H267.7 M251.4 722.8 H259.4"/>
<path d="M246.4 725.6 V748.5 a2 2 0 0 0 2 2 H262.4 a2 2 0 0 0 2 -2 V725.6"/>
<path d="M252.7 731.3 V745.6 M257.9 731.3 V745.6"/>
<path d="M244.2 834.3 A9 9 0 0 1 260.3 832"/><path d="M261.9 826.4 V834.3 H254.8" stroke-width="2.7"/><path d="M257.5 831 L261 833.6" stroke-width="2.4"/>
<path d="M261.5 840.3 A9 9 0 0 1 246 843.5"/><path d="M244.1 848.4 V840.5 H250.8" stroke-width="2.7"/><path d="M248.2 843.5 L245 841.2" stroke-width="2.4"/>
<path d="M260 843.5 L268.6 852"/>
</svg>
<svg class="a" style="left:0;top:0" width="1536" height="1011" fill="#5f6368">
<path d="M247.6 490 H263.5 V496.3 H247.6Z"/><circle cx="255.5" cy="489" r="3.6"/>
<path d="M247.6 556.5 H263.5 V562.8 H247.6Z"/><circle cx="255.5" cy="555.5" r="3.6"/>
</svg>
<svg class="a" style="left:0;top:0" width="1536" height="1011" fill="#fff">
<circle cx="255.5" cy="489.2" r="1.4"/><circle cx="255.5" cy="555.7" r="1.4"/></svg>
<div class="menu" style="left:878px;top:638px;width:545px;height:293.5px"></div>
<div class="a" style="left:878px;top:719.5px;width:542px;height:66px;background:#f1f3f4"></div>
<div class="t" style="left:912.5px;top:669px;font-size:30px;letter-spacing:-0.62px;color:#202124">Rows <b>up</b></div>
<div class="t" style="left:912.5px;top:735.5px;font-size:30px;letter-spacing:-0.62px;color:#202124">Rows <b>down</b></div>
<div class="t" style="left:912.5px;top:802px;font-size:30px;letter-spacing:-0.62px;color:#9aa0a6">Column <b>left</b></div>
<div class="t" style="left:912.5px;top:868.5px;font-size:30px;letter-spacing:-0.62px;color:#9aa0a6">Column <b>right</b></div>
<svg class="a" style="left:0;top:0" width="1536" height="1011">
<path fill-rule="evenodd" fill="#c00000" d="M165.9 659.7 V642.5 Q165.9 635.5 172.3 638.6 L225.6 668.6 Q229.6 672 225.6 675.4 L172.3 705.4 Q165.9 708.5 165.9 701.5 V684.7 H73 C63 684.7 59.8 678.5 59.8 672.2 C59.8 665.9 63 659.7 73 659.7 Z M175 666 V648.2 L216 672 L175 697.8 V679 H77 C71 679 68.9 676 68.9 672.5 C68.9 669 71 666 77 666 Z"/>
<path fill-rule="evenodd" fill="#c00000" transform="translate(645.3 91.4)" d="M165.9 659.7 V642.5 Q165.9 635.5 172.3 638.6 L225.6 668.6 Q229.6 672 225.6 675.4 L172.3 705.4 Q165.9 708.5 165.9 701.5 V684.7 H73 C63 684.7 59.8 678.5 59.8 672.2 C59.8 665.9 63 659.7 73 659.7 Z M175 666 V648.2 L216 672 L175 697.8 V679 H77 C71 679 68.9 676 68.9 672.5 C68.9 669 71 666 77 666 Z"/>
</svg></body></html>
